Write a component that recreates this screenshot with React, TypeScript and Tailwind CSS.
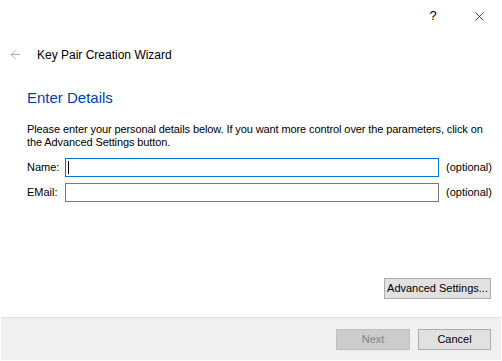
import { ArrowLeft, X } from "lucide-react"

const font = { fontFamily: '"Liberation Sans", Arial, sans-serif' }

export default function App() {
  return (
    <div
      className="w-[502px] h-[361px] bg-white flex flex-col text-[11px] text-black overflow-hidden"
      style={font}
    >
      {/* window chrome */}
      <div className="h-[32px] flex items-center justify-end">
        <div className="w-[46px] h-[32px] flex items-center justify-center text-[13px]">?</div>
        <div className="w-[46px] h-[32px] flex items-center justify-center">
          <X size={15} strokeWidth={1.2} />
        </div>
      </div>

      <div className="h-[44px] flex items-center pl-[8px]">
        <ArrowLeft size={15} strokeWidth={1.5} className="text-[#a8a8a8]" />
        <span className="ml-[14px] text-[12px] mt-[1px]">Key Pair Creation Wizard</span>
      </div>

      <div className="pl-[27px] pr-[10px] flex-1 flex flex-col">
        <div className="text-[15px] text-[#0040b0] mt-[12px] leading-[20px]">Enter Details</div>
        <p className="mt-[15px] leading-[13px] tracking-[-0.1px] whitespace-nowrap">
          Please enter your personal details below. If you want more control over the parameters, click on
          <br />
          the Advanced Settings button.
        </p>

        <div className="mt-[9px] flex flex-col gap-[6px]">
          <div className="flex items-center h-[19px] -ml-px">
            <span className="w-[39px] shrink-0 pl-px">Name:</span>
            <div className="w-[374px] shrink-0 h-[19px] border border-[#0078d7] flex items-center pl-[2px]">
              <div className="w-px h-[13px] bg-black" />
            </div>
            <span className="ml-[7px] whitespace-nowrap">(optional)</span>
          </div>
          <div className="flex items-center h-[19px] -ml-px">
            <span className="w-[39px] shrink-0 pl-px">EMail:</span>
            <div className="w-[374px] shrink-0 h-[19px] border border-[#7a7a7a]" />
            <span className="ml-[7px] whitespace-nowrap">(optional)</span>
          </div>
        </div>

        <div className="flex-1" />
        <div className="flex justify-end mb-[18px] pr-[1px]">
          <button className="w-[107px] h-[21px] bg-[#e1e1e1] border border-[#adadad] leading-none whitespace-nowrap">
            Advanced Settings...
          </button>
        </div>
      </div>

      <div className="h-[43px] mx-px mb-px bg-[#f0f0f0] border-t border-[#dfdfdf] flex items-center justify-end gap-[8px] pr-[10px]">
        <button className="w-[74px] h-[21px] bg-[#cccccc] border border-[#bfbfbf] text-[#838383] leading-none" disabled>
          Next
        </button>
        <button className="w-[73px] h-[21px] bg-[#e1e1e1] border border-[#adadad] leading-none">Cancel</button>
      </div>
    </div>
  )
}
